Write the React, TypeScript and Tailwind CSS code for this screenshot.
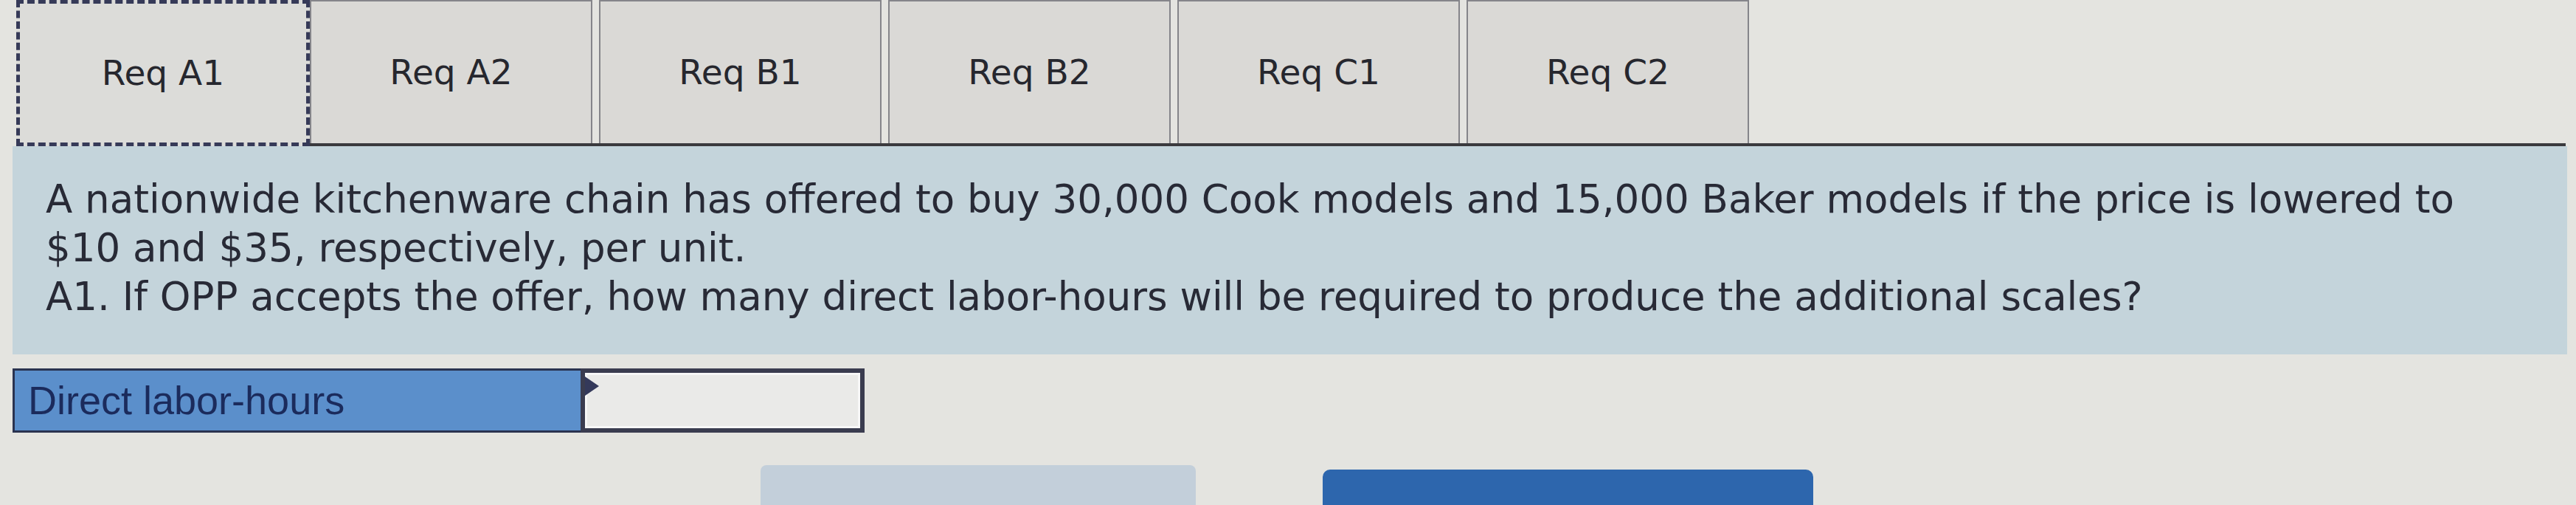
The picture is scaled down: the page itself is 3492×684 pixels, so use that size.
const tabs = ["Req A1", "Req A2", "Req B1", "Req B2", "Req C1", "Req C2"];

function Tab({ label, active }: { label: string; active?: boolean }) {
  return (
    <div
      className={
        active
          ? "flex h-[198px] w-[398px] shrink-0 items-center justify-center border-[5px] border-dashed border-[#363a58] bg-[#dcdcd9] text-[47px] text-[#26272e]"
          : "flex h-[194px] w-[383px] shrink-0 items-center justify-center border-x-2 border-t-2 border-[#85858a] bg-[#dad9d6] text-[47px] text-[#26272e]"
      }
    >
      {label}
    </div>
  );
}

export default function App() {
  return (
    <div
      className="h-[684px] w-[3492px] overflow-hidden bg-[#e4e4e0] text-[#282a36]"
      style={{ fontFamily: '"DejaVu Sans", Verdana, sans-serif' }}
    >
      {/* requirement tabs */}
      <div className="flex items-end pl-[22px] pr-[14px]">
        <Tab label={tabs[0]} active />
        <div className="flex flex-1 items-end gap-[9px] border-b-[4px] border-[#3a3a3e]">
          {tabs.slice(1).map((t) => (
            <Tab key={t} label={t} />
          ))}
        </div>
      </div>

      {/* question text */}
      <div className="ml-[17px] mr-[12px] bg-[#c4d4db] pb-[45px] pl-[45px] pr-[80px] pt-[39px] text-[53px] leading-[66px]">
        <p>
          A nationwide kitchenware chain has offered to buy 30,000 Cook models and 15,000 Baker models if the
          price is lowered to $10 and $35, respectively, per unit.
        </p>
        <p>A1. If OPP accepts the offer, how many direct labor-hours will be required to produce the additional scales?</p>
      </div>

      {/* answer row */}
      <div className="ml-[17px] mt-[19px] flex h-[87px] w-[1155px]">
        <div
          className="flex w-[770px] items-center border-[3px] border-r-0 border-[#2a3350] bg-[#5b8fcb] pl-[18px] text-[54px] text-[#1b2b5c]"
          style={{ fontFamily: '"Liberation Sans", Arial, sans-serif' }}
        >
          Direct labor-hours
        </div>
        <div className="relative flex-1 border-[6px] border-[#3a3c4f] bg-[#eaeae8] shadow-[inset_0_0_0_3px_#f7f7f7]">
          <svg className="absolute left-0 top-[5px]" width="20" height="26" viewBox="0 0 20 26">
            <polygon points="0,0 19,13 0,26" fill="#34395a" />
          </svg>
        </div>
      </div>

      {/* bottom buttons */}
      <div className="mt-[44px] flex items-start">
        <div className="ml-[1031px] h-[90px] w-[590px] rounded-t-[8px] bg-[#c3cfda]" />
        <div className="ml-[172px] mt-[6px] h-[90px] w-[665px] rounded-t-[10px] bg-[#2d66ad]" />
      </div>
    </div>
  );
}
